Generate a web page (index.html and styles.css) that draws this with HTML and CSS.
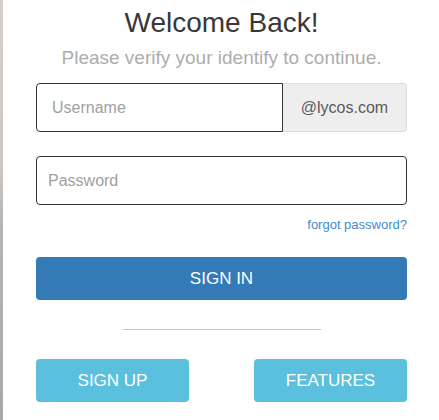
FILE: index.html
```html
<!DOCTYPE html>
<html lang="en">
<head>
  <meta charset="UTF-8">
  <meta name="viewport" content="width=device-width, initial-scale=1.0">
  <title>Welcome Back</title>
  <link rel="stylesheet" href="styles.css">
</head>
<body>
  <div class="edge"></div>
  <div class="login">
    <h1>Welcome Back!</h1>
    <p class="lead">Please verify your identify to continue.</p>

    <div class="input-group">
      <input type="text" class="user" placeholder="Username">
      <span class="addon">@lycos.com</span>
    </div>

    <input type="password" class="pass" placeholder="Password">

    <div class="forgot"><a href="#">forgot password?</a></div>

    <button class="btn btn-primary">SIGN IN</button>

    <hr>

    <div class="actions">
      <button class="btn btn-info">SIGN UP</button>
      <button class="btn btn-info">FEATURES</button>
    </div>
  </div>
</body>
</html>
```

FILE: styles.css
```css
body { margin: 0; background: #fff; font-family: "Liberation Sans", Arial, sans-serif; display: flex; height: 420px; overflow: hidden; }
.edge { width: 3px; background: linear-gradient(#d9cfc9 0%, #cfc6c0 40%, #b4b4b4 55%, #a9a9a9 100%); flex-shrink: 0; }

.login { width: 371px; margin-left: 33px; display: flex; flex-direction: column; }
.login h1 { margin: 7px 0 0; font-size: 28px; line-height: 32px; font-weight: normal; color: #383838; text-align: center; }
.login .lead { margin: 7px 0 0; font-size: 19px; line-height: 24px; color: #adadad; text-align: center; }

.input-group { display: flex; height: 49px; margin-top: 13px; box-sizing: border-box; }
.input-group .user { flex: 1; min-width: 0; border: 1px solid #333; border-radius: 4px 0 0 4px; padding: 0 15px; font-size: 16px; font-family: inherit; outline: none; }
.input-group .addon { width: 124px; box-sizing: border-box; display: flex; align-items: center; justify-content: center; background: #eee; color: #5a5a5a; font-size: 16px; border: 1px solid #ddd; border-left: none; border-radius: 0 4px 4px 0; }

.pass { margin-top: 24px; height: 49px; box-sizing: border-box; border: 1px solid #333; border-radius: 4px; padding: 0 11px; font-size: 16px; font-family: inherit; outline: none; }
input::placeholder { color: #a0a0a0; }

.forgot { margin-top: 12px; text-align: right; font-size: 13px; line-height: 16px; }
.forgot a { color: #428bca; text-decoration: none; }

.btn { border: none; border-radius: 4px; height: 43px; color: #fff; font-size: 17px; font-family: inherit; cursor: pointer; }
.btn-primary { margin-top: 24px; background: #337ab7; }
.btn-info { background: #5bc0de; width: 153px; }

.login hr { width: 198px; margin: 29px auto 0; border: none; border-top: 1px solid #c4c4c4; }
.actions { display: flex; justify-content: space-between; margin-top: 29px; }
```
